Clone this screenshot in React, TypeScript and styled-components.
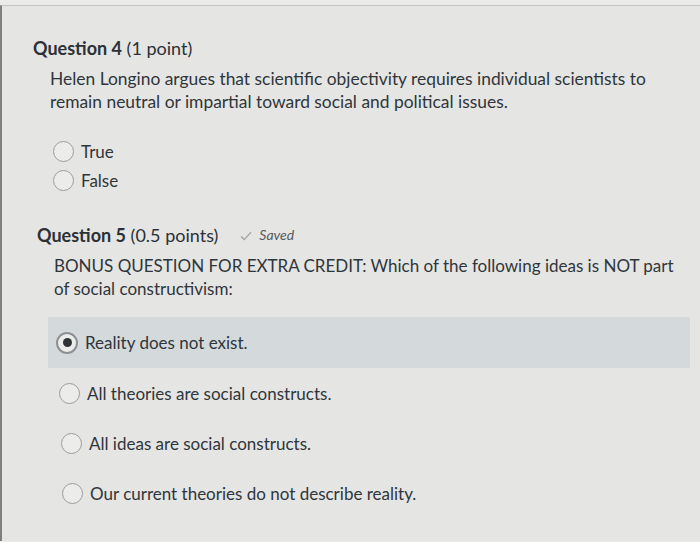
import React from 'react';
import styled, { createGlobalStyle } from 'styled-components';

const GlobalStyle = createGlobalStyle`
  html, body {
    margin: 0;
    padding: 0;
    background-color: #ebebe9;
  }
  body {
    font-family: Lato, 'Open Sans', sans-serif;
    color: #2f363b;
  }
`;

const Frame = styled.div`
  margin-top: 5px;
  height: 536px;
  border-top: 1px solid #c4c5c3;
  border-left: 2px solid #7f807e;
  background-color: #e5e5e3;
  overflow: hidden;
  box-sizing: border-box;
`;

const Question = styled.section<{ $indent: number; $top: number }>`
  padding-left: ${(p) => p.$indent}px;
  padding-top: ${(p) => p.$top}px;
`;

const Heading = styled.h2`
  margin: 0;
  display: flex;
  align-items: center;
  gap: 22px;
  font-size: 18px;
  line-height: 24px;
  font-weight: 400;
  color: #2b3136;
  > span > strong {
    font-weight: 700;
  }
`;

const Saved = styled.span`
  display: inline-flex;
  align-items: center;
  gap: 7px;
  font-size: 14px;
  font-style: italic;
  color: #55595c;
  svg {
    margin-top: 1px;
  }
`;

const Prompt = styled.p<{ $indent: number; $size: number }>`
  margin: 7px 0 0 ${(p) => p.$indent}px;
  padding-right: 14px;
  font-size: ${(p) => p.$size}px;
  line-height: 23px;
`;

const CompactList = styled.div`
  margin: 24px 0 0 20px;
  display: flex;
  flex-direction: column;
`;

const CompactOption = styled.label`
  display: flex;
  align-items: center;
  gap: 7px;
  height: 29px;
  font-size: 17px;
`;

const WideList = styled.div`
  margin: 17px 10px 0 11px;
  display: flex;
  flex-direction: column;
`;

const WideOption = styled.label<{ $selected?: boolean; $shift: number }>`
  display: flex;
  align-items: center;
  gap: 7px;
  height: 50px;
  padding-left: ${(p) => 8 + p.$shift}px;
  font-size: 17px;
  background-color: ${(p) => (p.$selected ? '#d4d9dc' : 'transparent')};
  &:first-child {
    height: 51px;
  }
`;

const Radio = styled.span<{ $checked?: boolean }>`
  width: ${(p) => (p.$checked ? 22 : 21)}px;
  height: ${(p) => (p.$checked ? 22 : 21)}px;
  border-radius: 50%;
  box-sizing: border-box;
  border: ${(p) => (p.$checked ? '2px solid #8d9194' : '1px solid #9a9c9c')};
  background-color: #ececea;
  display: flex;
  align-items: center;
  justify-content: center;
  flex-shrink: 0;
  &::after {
    content: '';
    display: ${(p) => (p.$checked ? 'block' : 'none')};
    width: 9px;
    height: 9px;
    border-radius: 50%;
    background-color: #2f3336;
  }
`;

const CheckIcon = () => (
  <svg width="12" height="10" viewBox="0 0 12 10">
    <path d="M1 5.5 L4.2 8.6 L11 1.2" fill="none" stroke="#a3a6a6" strokeWidth="1.4" />
  </svg>
);

const bonusOptions = [
  { text: 'Reality does not exist.', selected: true, shift: 0 },
  { text: 'All theories are social constructs.', selected: false, shift: 3 },
  { text: 'All ideas are social constructs.', selected: false, shift: 5 },
  { text: 'Our current theories do not describe reality.', selected: false, shift: 6 },
];

const App: React.FC = () => {
  return (
    <>
      <GlobalStyle />
      <Frame>
        <Question $indent={31} $top={30}>
          <Heading>
            <span><strong>Question 4</strong> (1 point)</span>
          </Heading>
          <Prompt $indent={17} $size={17.4}>
            Helen Longino argues that scientific objectivity requires individual scientists to
            remain neutral or impartial toward social and political issues.
          </Prompt>
          <CompactList>
            <CompactOption><Radio />True</CompactOption>
            <CompactOption><Radio />False</CompactOption>
          </CompactList>
        </Question>
        <Question $indent={35} $top={28}>
          <Heading>
            <span><strong>Question 5</strong> (0.5 points)</span>
            <Saved><CheckIcon />Saved</Saved>
          </Heading>
          <Prompt $indent={17} $size={17}>
            BONUS QUESTION FOR EXTRA CREDIT: Which of the following ideas is NOT part of
            social constructivism:
          </Prompt>
          <WideList>
            {bonusOptions.map((o) => (
              <WideOption key={o.text} $selected={o.selected} $shift={o.shift}>
                <Radio $checked={o.selected} />
                {o.text}
              </WideOption>
            ))}
          </WideList>
        </Question>
      </Frame>
    </>
  );
};

export default App;
